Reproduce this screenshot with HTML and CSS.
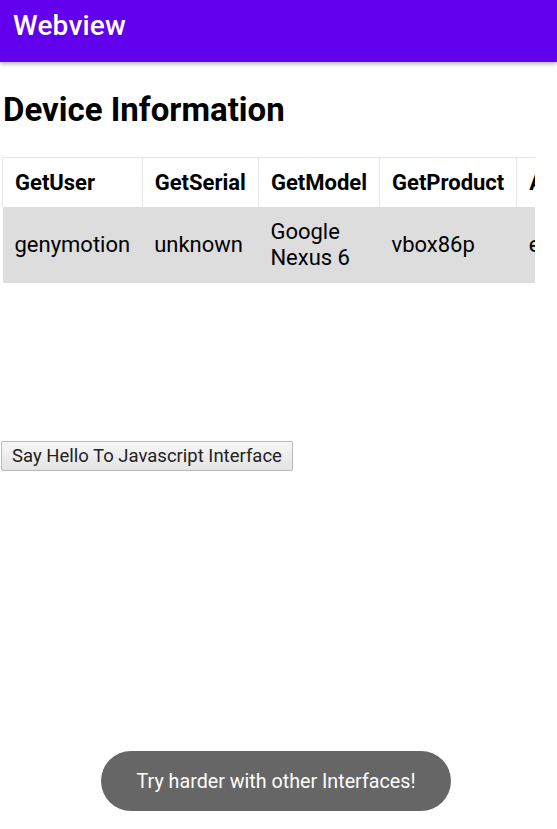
FILE: index.html
```html
<!DOCTYPE html>
<html>
<head>
<meta charset="utf-8">
<link rel="stylesheet" href="styles.css">
</head>
<body>
<header class="appbar"><span class="appbar-title">Webview</span></header>
<main class="content">
  <h1 class="heading">Device Information</h1>
  <div class="table-wrap">
    <table class="info">
      <thead>
        <tr><th>GetUser</th><th>GetSerial</th><th>GetModel</th><th>GetProduct</th><th>AndroidId</th></tr>
      </thead>
      <tbody>
        <tr><td>genymotion</td><td>unknown</td><td class="wrap">Google Nexus 6</td><td>vbox86p</td><td>e7a1b2c3</td></tr>
      </tbody>
    </table>
  </div>
  <div class="btn-row"><button class="hello-btn">Say Hello To Javascript Interface</button></div>
</main>
<div class="toast">Try harder with other Interfaces!</div>
</body>
</html>
```
FILE: styles.css
```css
html, body { margin: 0; padding: 0; }
body {
  width: 557px;
  height: 829px;
  overflow: hidden;
  background: #fff;
  font-family: Roboto, "Noto Sans", sans-serif;
  position: relative;
}
.appbar {
  height: 62px;
  background: #6200ee;
  box-shadow: 0 2px 4px rgba(0,0,0,0.3);
  display: flex;
  align-items: center;
  padding-left: 13px;
  position: relative;
  z-index: 2;
}
.appbar-title {
  color: #fff;
  font-size: 28px;
  font-weight: 500;
  letter-spacing: 0.2px;
  margin-top: -12px;
}
.content { padding: 0 0 0 2px; }
.heading {
  margin: 25px 0 0 1px;
  font-size: 33px;
  font-weight: 700;
  line-height: 46px;
  color: #000;
}
.table-wrap {
  margin-top: 24px;
  width: 533px;
  overflow: hidden;
}
.info {
  border-collapse: collapse;
  font-size: 22px;
  color: #000;
}
.info th {
  font-weight: 700;
  text-align: left;
  height: 49px;
  padding: 0 12px;
  border: 1px solid #e6e6e6;
  border-bottom: none;
  background: #fff;
  white-space: nowrap;
}
.info td {
  background: #dddddd;
  height: 76px;
  padding: 0 12px;
  line-height: 26px;
  vertical-align: middle;
  white-space: nowrap;
}
.info td.wrap { white-space: normal; width: 80px; }
.btn-row { margin-top: 158px; }
.hello-btn {
  font-family: Roboto, sans-serif;
  font-size: 18.5px;
  color: #222;
  padding: 0 10px;
  height: 30px;
  margin-left: -1px;
  background: linear-gradient(#f6f6f6, #e4e4e4);
  border: 1px solid #b8b8b8;
  border-radius: 2px;
}
.toast {
  position: absolute;
  left: 101px;
  top: 751px;
  width: 350px;
  height: 60px;
  border-radius: 30px;
  background: #666666;
  color: #fff;
  font-size: 19.7px;
  display: flex;
  align-items: center;
  justify-content: center;
}
```
